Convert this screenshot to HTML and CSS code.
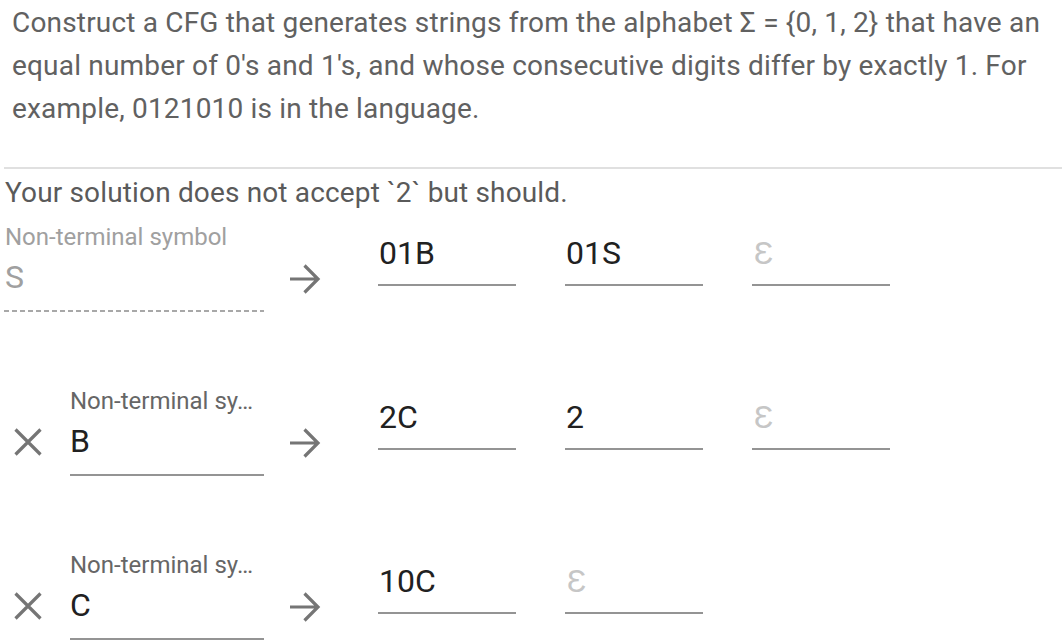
FILE: index.html
```html
<!DOCTYPE html>
<html lang="en">
<head>
<meta charset="utf-8">
<title>CFG exercise</title>
<link rel="stylesheet" href="styles.css">
</head>
<body>
<div class="page">
  <p class="prompt">Construct a CFG that generates strings from the alphabet &Sigma; = {0, 1, 2} that have an equal number of 0's and 1's, and whose consecutive digits differ by exactly 1. For example, 0121010 is in the language.</p>
  <hr class="divider">
  <div class="feedback">Your solution does not accept `2` but should.</div>
  <div class="rules">
    <div class="rule">
      <div class="lhs">
        <div class="nt nt-start">
          <div class="nt-label">Non-terminal symbol</div>
          <div class="nt-input">S</div>
        </div>
      </div>
      <svg class="arrow" viewBox="0 0 32 30" width="32" height="30" aria-hidden="true"><path d="M1 15H29M15.5 1.5L29 15L15.5 28.5" fill="none" stroke="#757575" stroke-width="3.2"/></svg>
      <div class="rhs">
        <div class="prod"><span class="prod-text">01B</span></div>
        <div class="prod"><span class="prod-text">01S</span></div>
        <div class="prod"><span class="prod-text placeholder">&#400;</span></div>
      </div>
    </div>
    <div class="rule">
      <div class="lhs">
        <div class="remove">
          <svg viewBox="0 0 28 28" width="28" height="28" aria-hidden="true"><path d="M1.5 1.5L26.5 26.5M26.5 1.5L1.5 26.5" fill="none" stroke="#757575" stroke-width="3.2"/></svg>
        </div>
        <div class="nt nt-editable">
          <div class="nt-label">Non-terminal sy&hellip;</div>
          <div class="nt-input">B</div>
        </div>
      </div>
      <svg class="arrow" viewBox="0 0 32 30" width="32" height="30" aria-hidden="true"><path d="M1 15H29M15.5 1.5L29 15L15.5 28.5" fill="none" stroke="#757575" stroke-width="3.2"/></svg>
      <div class="rhs">
        <div class="prod"><span class="prod-text">2C</span></div>
        <div class="prod"><span class="prod-text">2</span></div>
        <div class="prod"><span class="prod-text placeholder">&#400;</span></div>
      </div>
    </div>
    <div class="rule">
      <div class="lhs">
        <div class="remove">
          <svg viewBox="0 0 28 28" width="28" height="28" aria-hidden="true"><path d="M1.5 1.5L26.5 26.5M26.5 1.5L1.5 26.5" fill="none" stroke="#757575" stroke-width="3.2"/></svg>
        </div>
        <div class="nt nt-editable">
          <div class="nt-label">Non-terminal sy&hellip;</div>
          <div class="nt-input">C</div>
        </div>
      </div>
      <svg class="arrow" viewBox="0 0 32 30" width="32" height="30" aria-hidden="true"><path d="M1 15H29M15.5 1.5L29 15L15.5 28.5" fill="none" stroke="#757575" stroke-width="3.2"/></svg>
      <div class="rhs">
        <div class="prod"><span class="prod-text">10C</span></div>
        <div class="prod"><span class="prod-text placeholder">&#400;</span></div>
      </div>
    </div>
  </div>
</div>
</body>
</html>
```
FILE: styles.css
```css
html, body {
  margin: 0;
  padding: 0;
  background: #ffffff;
}

body {
  font-family: Roboto, "Liberation Sans", Arial, sans-serif;
  overflow: hidden;
}

.page {
  padding-top: 1px;
}

.prompt {
  margin: 0 0 37px 12px;
  font-size: 28px;
  line-height: 43px;
  letter-spacing: 0.18px;
  color: #616161;
}

.divider {
  margin: 0 0 0 4px;
  border: none;
  border-top: 2px solid #e0e0e0;
  height: 0;
}

.feedback {
  margin: 9px 0 0 5px;
  font-size: 28px;
  line-height: 30px;
  letter-spacing: 0.15px;
  color: #5a5a5a;
}

.rules {
  margin-top: 16px;
  display: flex;
  flex-direction: column;
  gap: 76px;
}

.rule {
  display: flex;
  align-items: flex-start;
}

.lhs {
  display: flex;
  align-items: flex-start;
  width: 260px;
  margin-left: 4px;
}

.remove {
  width: 66px;
  display: flex;
  justify-content: flex-start;
  padding: 40px 0 0 10px;
  box-sizing: border-box;
}

.remove svg {
  display: block;
}

.nt {
  flex: 1;
}

.nt-label {
  font-size: 24px;
  line-height: 26px;
  color: #666666;
  white-space: nowrap;
}

.nt-input {
  margin-top: 9px;
  font-size: 32px;
  line-height: 36px;
  color: #212121;
  padding-bottom: 15px;
  border-bottom: 2px solid #949494;
}

.nt-start .nt-label {
  color: #a0a0a0;
  padding-left: 1px;
}

.nt-start .nt-input {
  color: #a0a0a0;
  padding-left: 1px;
  border-bottom: none;
  padding-bottom: 17px;
  background-image: repeating-linear-gradient(to right, #a8a8a8 0 5px, transparent 5px 8px);
  background-size: 100% 2px;
  background-repeat: no-repeat;
  background-position: left bottom;
}

.arrow {
  display: block;
  margin: 40px 0 0 25px;
  flex: none;
}

.rhs {
  display: flex;
  gap: 49px;
  margin-left: 57px;
}

.prod {
  width: 138px;
  margin-top: 11px;
  border-bottom: 2px solid #949494;
  padding-bottom: 13px;
}

.prod-text {
  display: block;
  font-size: 32px;
  line-height: 36px;
  color: #212121;
  padding-left: 1px;
}

.prod-text.placeholder {
  color: #c6c6c6;
  padding-left: 2px;
}
```
